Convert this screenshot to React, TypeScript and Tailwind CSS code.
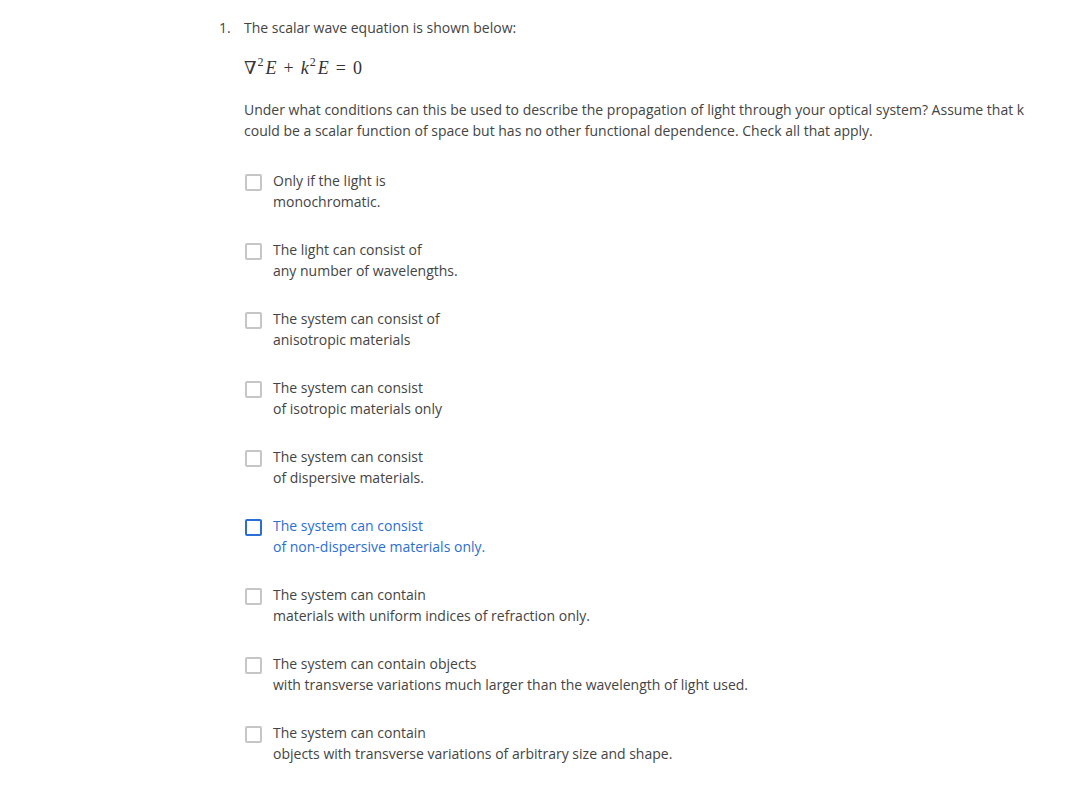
const options = [
  ["Only if the light is", "monochromatic."],
  ["The light can consist of", "any number of wavelengths."],
  ["The system can consist of", "anisotropic materials"],
  ["The system can consist", "of isotropic materials only"],
  ["The system can consist", "of dispersive materials."],
  ["The system can consist", "of non-dispersive materials only."],
  ["The system can contain", "materials with uniform indices of refraction only."],
  ["The system can contain objects", "with transverse variations much larger than the wavelength of light used."],
  ["The system can contain", "objects with transverse variations of arbitrary size and shape."],
];

const Checkbox = ({ active }: { active: boolean }) => (
  <span
    className={`mt-[3.5px] ml-[1px] block w-[17px] h-[17px] shrink-0 rounded-[2px] border-2 bg-white ${
      active ? "border-[#2a6fd4]" : "border-[#c6c6c6]"
    }`}
  />
);

export default function App() {
  return (
    <div
      className="min-h-[785px] bg-white pt-[17px] pl-[219px] text-[14px] leading-[21px] text-[#444]"
      style={{ fontFamily: '"Open Sans", "Noto Sans", sans-serif' }}
    >
      <div className="flex">
        <span className="w-[25px] shrink-0">1.</span>
        <div className="flex flex-col w-[790px]">
          <div>The scalar wave equation is shown below:</div>

          {/* equation */}
          <div
            className="mt-[19px] h-[22px] flex items-center text-[18px] leading-none text-[#333]"
            style={{ fontFamily: '"Liberation Serif", "DejaVu Serif", serif' }}
          >
            <span>∇</span>
            <span className="text-[12px] relative -top-[6px] ml-[1px]">2</span>
            <i className="ml-[2px]">E</i>
            <span className="mx-[7px]">+</span>
            <i>k</i>
            <span className="text-[12px] relative -top-[6px] ml-[1px]">2</span>
            <i className="ml-[2px]">E</i>
            <span className="mx-[7px]">=</span>
            <span>0</span>
          </div>

          <p className="mt-[20px]">
            Under what conditions can this be used to describe the propagation of light through your optical system? Assume that k
            could be a scalar function of space but has no other functional dependence. Check all that apply.
          </p>

          <div className="mt-[29px] flex flex-col gap-[27px]">
            {options.map(([a, b], i) => {
              const active = i === 5;
              return (
                <label key={i} className="flex items-start gap-[11px] cursor-pointer">
                  <Checkbox active={active} />
                  <span className={active ? "text-[#2a6fd4]" : ""}>
                    {a}
                    <br />
                    {b}
                  </span>
                </label>
              );
            })}
          </div>
        </div>
      </div>
    </div>
  );
}
